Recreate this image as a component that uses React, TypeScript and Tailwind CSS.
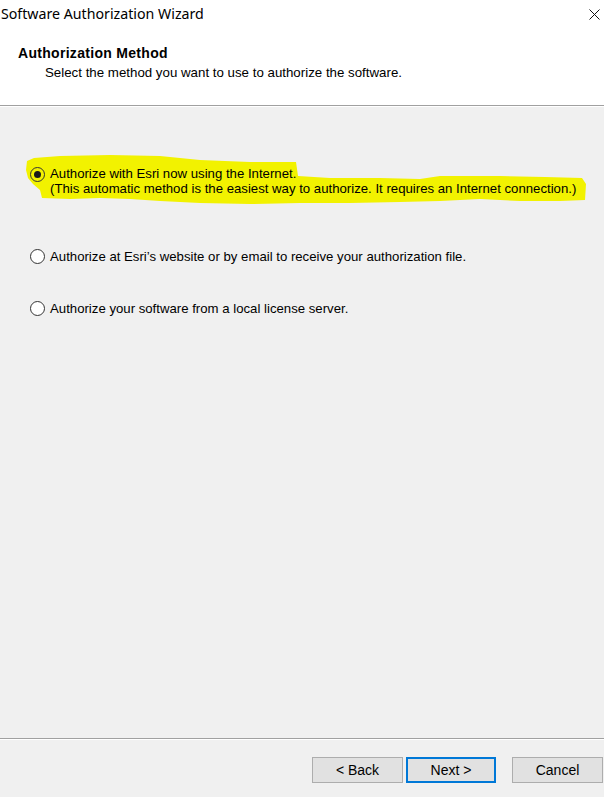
import React from 'react';

const body = { fontFamily: '"Liberation Sans", Arial, sans-serif' };

function Radio({ checked, highlighted }: { checked?: boolean; highlighted?: boolean }) {
  return (
    <span
      className={`flex h-[15px] w-[15px] shrink-0 items-center justify-center rounded-full border border-[#333] ${
        highlighted ? 'bg-transparent' : 'bg-white'
      }`}
    >
      {checked && <span className="h-[7px] w-[7px] rounded-full bg-[#1a1a1a]" />}
    </span>
  );
}

function Button({ label, focused }: { label: string; focused?: boolean }) {
  return (
    <button
      className={`flex h-[26px] items-center justify-center bg-[#e1e1e1] text-[14px] text-black ${
        focused ? 'w-[90px] border-2 border-[#0078d7]' : 'w-[91px] border border-[#adadad]'
      }`}
      style={body}
    >
      {label}
    </button>
  );
}

export default function App() {
  return (
    <div className="flex h-[797px] w-[604px] flex-col overflow-hidden bg-[#f0f0f0] text-black">
      <div className="h-[105px] bg-white">
        <div className="flex items-start justify-between pt-[4px]">
          <span
            className="pl-[1px] text-[14.2px] leading-[20px]"
            style={{ fontFamily: '"Noto Sans", "Open Sans", sans-serif' }}
          >
            Software Authorization Wizard
          </span>
          <svg className="mr-[4px] mt-[5px]" width="11" height="11" viewBox="0 0 11 11">
            <path d="M0.5 0.5 L10.5 10.5 M10.5 0.5 L0.5 10.5" stroke="#111" strokeWidth="1" />
          </svg>
        </div>
        <div className="mt-[22px] pl-[18px] text-[14px] font-bold leading-[15px] tracking-[0.3px]" style={body}>
          Authorization Method
        </div>
        <div className="mt-[4px] pl-[45px] text-[13.3px] leading-[15px]" style={body}>
          Select the method you want to use to authorize the software.
        </div>
      </div>
      <div className="h-px bg-[#a0a0a0]" />
      <div className="h-px bg-white" />

      <div className="relative flex-1" style={body}>
        <svg
          className="absolute left-0 top-0"
          width="604"
          height="120"
          viewBox="0 107 604 120"
        >
          <path
            d="M27 161 L34 158 L60 156 L110 155 L160 156 L200 160 L250 162 L296 162 L298 176 L330 178 L380 178 L420 179 L440 176 L500 176 L545 177 L582 178 L586 184 L585 200 L560 201 L520 201 L480 199 L440 201 L400 202 L350 203 L300 203 L250 204 L200 203 L160 201 L130 199 L100 198 L70 199 L42 198 L40 190 L33 184 L28 178 L26 170 Z"
            fill="#f2f200"
          />
        </svg>

        <div className="relative flex flex-col pl-[30px] pt-[59px] text-[13.2px] leading-[15px]">
          <div className="flex items-start gap-[5px]">
            <div className="pt-[1px]">
              <Radio checked highlighted />
            </div>
            <div>
              <div>Authorize with Esri now using the Internet.</div>
              <div>(This automatic method is the easiest way to authorize. It requires an Internet connection.)</div>
            </div>
          </div>
          <div className="mt-[53px] flex items-center gap-[5px]">
            <Radio />
            <span>Authorize at Esri’s website or by email to receive your authorization file.</span>
          </div>
          <div className="mt-[37px] flex items-center gap-[5px]">
            <Radio />
            <span>Authorize your software from a local license server.</span>
          </div>
        </div>
      </div>

      <div className="h-px bg-[#a0a0a0]" />
      <div className="h-px bg-white" />
      <div className="flex h-[57px] items-start justify-end pr-[1px] pt-[17px]">
        <div className="flex gap-[3px]">
          <Button label="< Back" />
          <Button label="Next >" focused />
        </div>
        <div className="ml-[16px]">
          <Button label="Cancel" />
        </div>
      </div>
    </div>
  );
}
